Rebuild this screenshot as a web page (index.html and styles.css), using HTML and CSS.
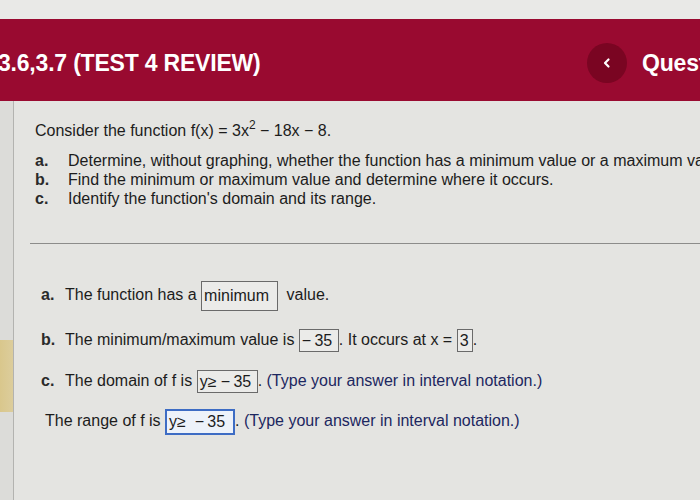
FILE: index.html
```html
<!DOCTYPE html>
<html>
<head>
<meta charset="utf-8">
<link rel="stylesheet" href="styles.css">
</head>
<body>
<div class="topstrip"></div>
<header class="header">
  <div class="title">3.6,3.7 (TEST 4 REVIEW)</div>
  <div class="back"><svg width="12" height="12" viewBox="0 0 12 12"><polyline points="7.5,2.5 4,6 7.5,9.5" fill="none" stroke="#fff" stroke-width="2.2" stroke-linecap="round" stroke-linejoin="round"/></svg></div>
  <div class="quest">Question</div>
</header>
<div class="content">
  <div class="rail"><div class="note"></div></div>
  <div class="main">
    <div class="question">
      <div class="lead">Consider the function f(x) = 3x<sup>2</sup> − 18x − 8.</div>
      <div class="part"><span class="plbl">a.</span>Determine, without graphing, whether the function has a minimum value or a maximum value.</div>
      <div class="part"><span class="plbl">b.</span>Find the minimum or maximum value and determine where it occurs.</div>
      <div class="part"><span class="plbl">c.</span>Identify the function's domain and its range.</div>
    </div>
    <div class="rule"></div>
    <div class="answers">
      <div class="row row-a"><span class="lbl">a.</span>The function has a <span class="box box-a">minimum</span> value.</div>
      <div class="row row-b"><span class="lbl">b.</span>The minimum/maximum value is <span class="box box-v">−&#8201;35</span>. It occurs at x = <span class="box box-x">3</span>.</div>
      <div class="row row-c"><span class="lbl">c.</span>The domain of f is <span class="box box-d">y≥ −&#8201;35</span>. <span class="hint">(Type your answer in interval notation.)</span></div>
      <div class="row row-r">The range of f is <span class="box box-r">y≥ &nbsp;−&#8201;35</span>. <span class="hint">(Type your answer in interval notation.)</span></div>
    </div>
  </div>
</div>
</body>
</html>
```
FILE: styles.css
```css
html, body {
  margin: 0;
  padding: 0;
}
body {
  width: 700px;
  height: 500px;
  overflow: hidden;
  background: #e4e4e1;
  font-family: "Liberation Sans", Arial, sans-serif;
  color: #1c1c1c;
}
.topstrip {
  height: 19px;
  background: #e9e9e7;
}
.header {
  height: 82px;
  box-sizing: border-box;
  padding-top: 6px;
  background: #990a30;
  color: #fff;
  display: flex;
  align-items: center;
  white-space: nowrap;
  overflow: hidden;
}
.title {
  flex: 1;
  margin-left: -2px;
  font-weight: bold;
  font-size: 23px;
  letter-spacing: -0.2px;
}
.back {
  flex: 0 0 40px;
  height: 40px;
  border-radius: 50%;
  background: #7a0522;
  display: flex;
  align-items: center;
  justify-content: center;
  margin-right: 15px;
}
.back svg {
  display: block;
}
.quest {
  flex: 0 0 58px;
  overflow: hidden;
  font-weight: bold;
  font-size: 23px;
  letter-spacing: -0.2px;
}
.content {
  display: flex;
  height: 399px;
}
.rail {
  flex: 0 0 13px;
  border-right: 1px solid #b3b3b0;
  background: #dcdcd9;
}
.note {
  margin-top: 239px;
  height: 72px;
  background: linear-gradient(90deg, #d9c78c, #dccd9c);
}
.main {
  flex: 1;
  padding-left: 16px;
  overflow: hidden;
  white-space: nowrap;
}
.question {
  padding-left: 5px;
  padding-top: 20px;
  font-size: 16px;
  line-height: 19px;
}
.lead {
  margin-bottom: 11px;
}
.lead sup {
  font-size: 12px;
  line-height: 0;
  vertical-align: 7px;
}
.plbl {
  display: inline-block;
  width: 33px;
  font-weight: bold;
  color: #2a2a2a;
}
.rule {
  margin-top: 35px;
  border-top: 1px solid #8c8c8a;
}
.answers {
  padding-left: 11px;
  font-size: 16px;
}
.row {
  white-space: nowrap;
}
.lbl {
  display: inline-block;
  width: 24px;
  font-weight: bold;
  color: #2a2a2a;
}
.row-a {
  margin-top: 35px;
  height: 32px;
  line-height: 32px;
}
.row-b {
  margin-top: 17px;
  height: 24px;
  line-height: 24px;
}
.row-c {
  margin-top: 17px;
  height: 24px;
  line-height: 24px;
}
.row-r {
  margin-top: 15px;
  height: 26px;
  line-height: 26px;
  padding-left: 4px;
}
.box {
  display: inline-block;
  vertical-align: middle;
  box-sizing: border-box;
  border: 1px solid #6a6a6a;
  background: #ebebe9;
  padding: 0 2px;
  text-align: left;
}
.box-a {
  width: 77px;
  height: 30px;
  line-height: 28px;
  margin-right: 4px;
}
.box-v {
  width: 40px;
  height: 23px;
  line-height: 21px;
}
.box-x {
  width: 16px;
  height: 23px;
  line-height: 21px;
}
.box-d {
  width: 61px;
  height: 23px;
  line-height: 21px;
}
.box-r {
  width: 70px;
  height: 26px;
  line-height: 22px;
  border: 2px solid #3d6cc4;
  background: #edf2fa;
}
.hint {
  color: #1c2760;
}
```
